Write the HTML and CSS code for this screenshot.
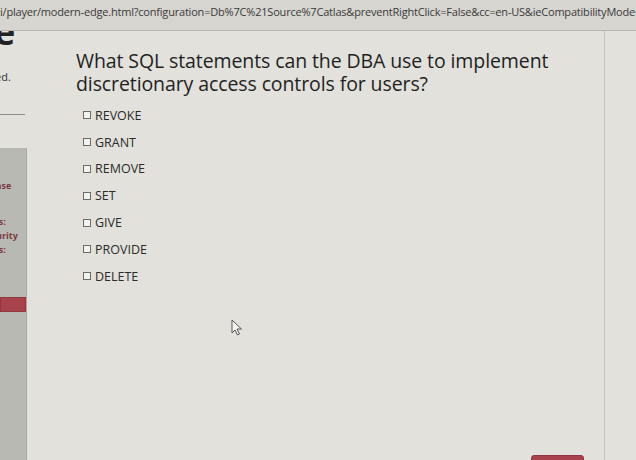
FILE: index.html
```html
<!DOCTYPE html>
<html lang="en">

<head>
  <meta charset="UTF-8">
  <meta name="viewport" content="width=device-width, initial-scale=1.0">
  <title>Quiz</title>
  <link rel="stylesheet" href="styles.css">
</head>

<body>
  <div class="urlbar">i/player/modern-edge.html?configuration=Db%7C%21Source%7Catlas&amp;preventRightClick=False&amp;cc=en-US&amp;ieCompatibilityMode=</div>
  <div class="page">
    <div class="side">
      <div class="side-top">
        <div class="big">e</div>
        <div class="small">ed.</div>
        <div class="rule"></div>
      </div>
      <div class="side-panel">
        <div class="item first">ase</div>
        <div class="item gap">ls:</div>
        <div class="item">urity</div>
        <div class="item">ls:</div>
        <div class="redbar"></div>
      </div>
    </div>
    <div class="main">
      <h1 class="question">What SQL statements can the DBA use to implement discretionary access controls for users?</h1>
      <ul class="options">
        <li><span class="box"></span>REVOKE</li>
        <li><span class="box"></span>GRANT</li>
        <li><span class="box"></span>REMOVE</li>
        <li><span class="box"></span>SET</li>
        <li><span class="box"></span>GIVE</li>
        <li><span class="box"></span>PROVIDE</li>
        <li><span class="box"></span>DELETE</li>
      </ul>
      <div class="footer">
        <button class="next"></button>
      </div>
    </div>
    <div class="edge"></div>
  </div>
  <svg class="cursor" width="12" height="18" viewBox="0 0 12 18">
    <path d="M1 1 L1 14 L4 11 L6.5 16 L8.5 15 L6 10 L10.5 10 Z" fill="#f4f4f2" stroke="#555" stroke-width="1"/>
  </svg>
</body>

</html>
```

FILE: styles.css
```css
* {
  padding: 0;
  margin: 0;
  box-sizing: border-box;
}

body {
  width: 636px;
  height: 460px;
  overflow: hidden;
  position: relative;
  background-color: #e2e1dc;
  font-family: "Open Sans", "Noto Sans", sans-serif;
  color: #262626;
}

.urlbar {
  height: 31px;
  padding-top: 4px;
  background-color: #d6d5d0;
  border-bottom: 1px solid #b9b8b3;
  font-size: 11px;
  letter-spacing: -0.2px;
  color: #3a3a3a;
  white-space: nowrap;
  overflow: hidden;
}

.page {
  display: flex;
  height: 429px;
}

.side {
  width: 27px;
  display: flex;
  flex-direction: column;
  overflow: hidden;
}

.side-top {
  height: 117px;
  overflow: hidden;
}

.big {
  font-size: 36px;
  font-weight: 700;
  line-height: 1;
  margin-top: -17px;
  margin-left: -6px;
  color: #222;
}

.small {
  font-size: 11px;
  margin-top: 19px;
  margin-left: -5px;
  color: #333;
}

.rule {
  height: 1px;
  width: 25px;
  background-color: #8a8a86;
  margin-top: 30px;
}

.side-panel {
  flex: 1;
  background-color: #b9b9b3;
  border-right: 1px solid #a9a9a4;
  padding-top: 31px;
}

.item {
  font-size: 9px;
  font-weight: 700;
  color: #7a3a40;
  line-height: 14px;
  margin-left: -4px;
}

.item.gap {
  margin-top: 22px;
}

.redbar {
  height: 15px;
  margin-top: 40px;
  background-color: #a8424c;
  border: 1px solid #8e3840;
}

.main {
  width: 578px;
  border-right: 1px solid #c4c3be;
  padding: 18px 0 0 49px;
  display: flex;
  flex-direction: column;
}

.question {
  font-size: 19.5px;
  font-weight: 400;
  line-height: 23px;
  letter-spacing: -0.1px;
  width: 500px;
  color: #1f1f1f;
}

.options {
  list-style: none;
  margin-top: 7px;
  padding-left: 7px;
}

.options li {
  display: flex;
  align-items: center;
  height: 26.8px;
  font-size: 12.5px;
  color: #2b2b2b;
}

.box {
  width: 8px;
  height: 8px;
  border: 1px solid #6a6a6a;
  background-color: #f2f2ef;
  margin-right: 4px;
}

.footer {
  flex: 1;
  display: flex;
  justify-content: flex-end;
  align-items: flex-end;
  padding-right: 20px;
}

.next {
  width: 53px;
  height: 7px;
  margin-bottom: -2px;
  background-color: #a8424c;
  border: 1px solid #8e3840;
  border-radius: 3px 3px 0 0;
}

.edge {
  flex: 1;
}

.cursor {
  position: absolute;
  left: 231px;
  top: 319px;
}
```
